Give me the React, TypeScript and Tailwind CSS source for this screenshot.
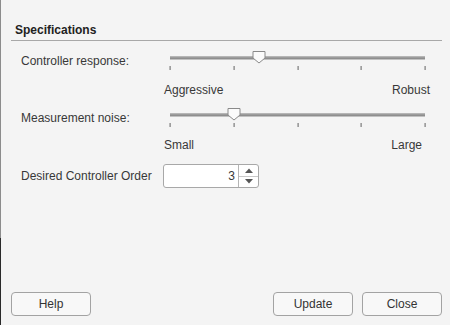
import React from "react";

const TICKS = [7, 71, 135, 198, 262];

function Slider({ value }: { value: number }) {
  // value = thumb centre in svg coords
  const x = value;
  return (
    <svg width={270} height={22} className="block">
      <rect x={7} y={6.5} width={255} height={3} fill="#8e8e8e" />
      <rect x={7} y={6.5} width={255} height={1} fill="#a9a9a9" />
      {TICKS.map((t) => (
        <rect key={t} x={t - 0.5} y={16} width={1.2} height={4} fill="#7a7a7a" />
      ))}
      <path
        d={`M${x - 6} 1.5 H${x + 6} V8 L${x} 13 L${x - 6} 8 Z`}
        fill="#fbfbfb"
        stroke="#8a8a8a"
        strokeWidth={1}
        strokeLinejoin="round"
      />
    </svg>
  );
}

function Button({ label }: { label: string }) {
  return (
    <button className="h-[24px] w-[80px] rounded-[4px] border border-[#a3a3a3] bg-[#f8f8f8] text-[12px] leading-[14px] text-[#333]">
      {label}
    </button>
  );
}

export default function App() {
  return (
    <div
      className="flex h-[325px] w-[450px] bg-[#f4f4f4] text-[#383838]"
      style={{ fontFamily: '"Liberation Sans", Arial, sans-serif' }}
    >
      <div className="flex w-px flex-col">
        <div className="h-[238px] bg-[#8c8c8c]" />
        <div className="flex-1 bg-[#2a2a2a]" />
      </div>
      <div className="flex flex-1 flex-col">
        <div className="ml-[10px] mr-[8px] mt-[23px] border-b border-[#a8a8a8] pb-[3px] pl-[4px] text-[12px] font-bold leading-[14px] text-[#222]">
          Specifications
        </div>

        <div className="mt-[9px] flex pl-[20px]">
          <div className="w-[142px] pt-[4px] text-[12px] leading-[14px]">Controller response:</div>
          <Slider value={96} />
        </div>
        <div className="ml-[163px] mt-[11px] flex w-[266px] justify-between text-[12px] leading-[14px]">
          <span>Aggressive</span>
          <span>Robust</span>
        </div>

        <div className="mt-[10px] flex pl-[20px]">
          <div className="w-[142px] pt-[4px] text-[12px] leading-[14px]">Measurement noise:</div>
          <Slider value={71} />
        </div>
        <div className="ml-[163px] mt-[9px] flex w-[258px] justify-between text-[12px] leading-[14px]">
          <span>Small</span>
          <span>Large</span>
        </div>

        <div className="mt-[12px] flex items-center pl-[20px]">
          <div className="w-[142px] text-[12px] leading-[14px]">Desired Controller Order</div>
          <div className="flex h-[24px] w-[96px] rounded-[3px] border border-[#a8a8a8] bg-white">
            <div className="flex flex-1 items-center justify-end pr-[3px] text-[12px] leading-[14px]">3</div>
            <div className="flex w-[20px] flex-col border-l border-[#b5b5b5]">
              <div className="flex flex-1 items-center justify-center border-b border-[#c8c8c8]">
                <svg width={8} height={5}>
                  <path d="M0 5 L4 0.5 L8 5 Z" fill="#555" />
                </svg>
              </div>
              <div className="flex flex-1 items-center justify-center">
                <svg width={8} height={5}>
                  <path d="M0 0 L8 0 L4 4.5 Z" fill="#555" />
                </svg>
              </div>
            </div>
          </div>
        </div>

        <div className="mt-auto flex items-center pb-[9px] pl-[10px] pr-[8px]">
          <Button label="Help" />
          <div className="flex-1" />
          <div className="flex gap-[9px]">
            <Button label="Update" />
            <Button label="Close" />
          </div>
        </div>
      </div>
    </div>
  );
}
